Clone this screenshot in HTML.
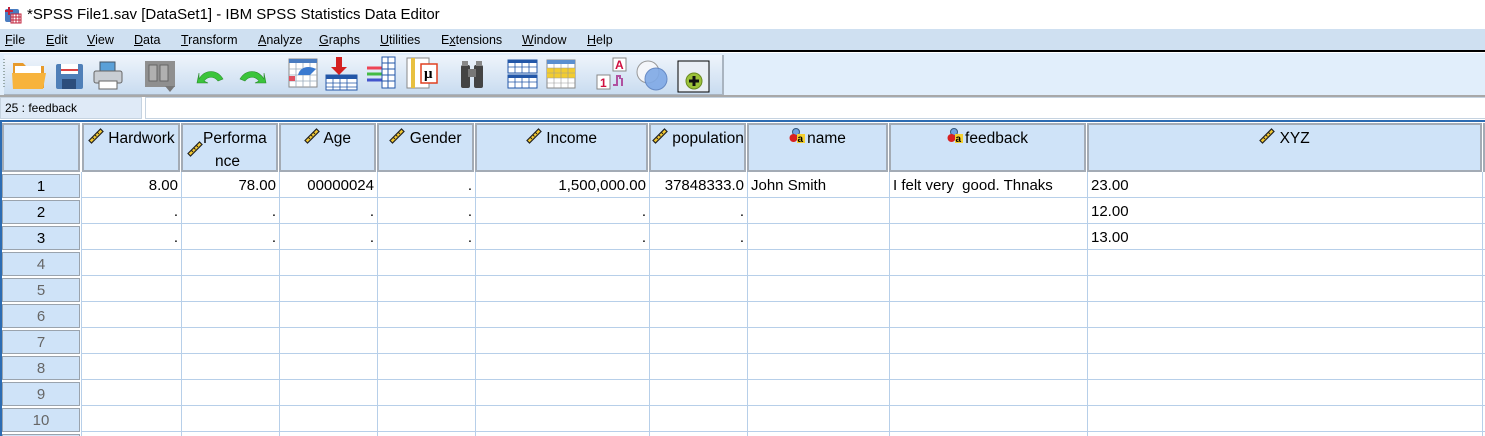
<!DOCTYPE html>
<html><head><meta charset="utf-8">
<style>
*{margin:0;padding:0;box-sizing:border-box}
html,body{width:1485px;height:436px;overflow:hidden}
body{background:#fff;font-family:"Liberation Sans",Arial,sans-serif;position:relative}
.abs{position:absolute}
#title{left:0;top:0;width:1485px;height:29px;background:#fff;font-size:15px;color:#000}
#menu{left:0;top:29px;width:1485px;height:23px;background:#cfe0f1;border-bottom:2px solid #000;font-size:12.5px}
#menu span{position:absolute;top:4px}
#tb{left:0;top:53px;width:1485px;height:44px;background:#e1eefb;border-bottom:2px solid #a8a8a8}
#tbin{left:4px;top:55px;width:720px;height:40px;background:linear-gradient(#eef4fb,#c9dcf0);border-right:2px solid #a9b4c0;border-bottom:1px solid #a9b4c0}
#ed{left:0;top:98px;width:1485px;height:23px;background:#fff}
.rh{position:absolute;left:2px;width:78px;height:24px;background:#cfe3f8;border:1px solid #9aa3ad;text-align:center;font-size:15px;line-height:23px}
.hd{position:absolute;top:123px;height:49px;background:#cfe3f8;border:2px solid #a3abb5;text-align:center;font-size:15.5px;line-height:23px;padding-top:2px;color:#000}
.row{position:absolute;left:81px;height:26px;display:flex;border-left:1px solid #b7cfe9}
.row div{height:26px;border-right:1px solid #b7cfe9;border-bottom:1px solid #b7cfe9;font-size:15px;line-height:28px;padding:0 3px;text-align:right;white-space:nowrap;overflow:hidden}
.row.last,.row.last div{height:4px;border-bottom:none}
.row div.l{text-align:left}
.c1{width:100px}.c2{width:98px}.c3{width:98px}.c4{width:98px}.c5{width:174px}.c6{width:98px}.c7{width:142px}.c8{width:198px}.c9{width:395px}.c10{width:4px}
.ic{position:absolute}
.ru{vertical-align:-1px}
</style></head><body>
<svg width="0" height="0" style="position:absolute"><defs><symbol id="r" viewBox="0 0 16 16"><path d="M1 12.5L12.5 1 15 3.5 3.5 15z" fill="#f2c832" stroke="#222" stroke-width="1.2"/><path d="M4.5 9.5l1.5 1.5M7 7l1.5 1.5M9.5 4.5l1.5 1.5" stroke="#222" stroke-width="1"/></symbol></defs></svg>
<div id="title" class="abs">
<svg class="ic" style="left:4px;top:6px" width="18" height="18" viewBox="0 0 18 18"><rect x="1" y="3" width="14" height="13" rx="2" fill="#4a7cc0"/><rect x="7" y="8" width="10" height="9" fill="#fff" stroke="#c0223b"/><path d="M9 8v9M12 8v9M15 8v9M7 11h10M7 14h10" stroke="#c0223b" stroke-width="1"/><path d="M5 1v8M1 5h8" stroke="#c0223b" stroke-width="2"/></svg>
<span class="abs" style="left:27px;top:6px">*SPSS File1.sav [DataSet1] - IBM SPSS Statistics Data Editor</span>
</div>
<div id="menu" class="abs">
<span style="left:5px"><u>F</u>ile</span><span style="left:46px"><u>E</u>dit</span><span style="left:87px"><u>V</u>iew</span><span style="left:134px"><u>D</u>ata</span><span style="left:181px"><u>T</u>ransform</span><span style="left:258px"><u>A</u>nalyze</span><span style="left:319px"><u>G</u>raphs</span><span style="left:380px"><u>U</u>tilities</span><span style="left:441px">E<u>x</u>tensions</span><span style="left:522px"><u>W</u>indow</span><span style="left:587px"><u>H</u>elp</span>
</div>
<div id="tb" class="abs"></div>
<div id="tbin" class="abs"></div>
<svg class="abs" style="left:0;top:53px" width="730" height="44" viewBox="0 0 730 44">
<path d="M4 6v30" stroke="#9aa" stroke-width="2" stroke-dasharray="1 2"/>
<path d="M13 10h10l3 3h18v22H13z" fill="#e79a2b"/><rect x="15" y="13" width="26" height="10" fill="#fff"/><path d="M12 20h34l-3 16H13z" fill="#f7b33c"/>
<rect x="56" y="11" width="27" height="25" rx="2" fill="#4f7fb8"/><rect x="61" y="11" width="17" height="10" fill="#fff"/><rect x="61" y="16" width="17" height="2" fill="#d44"/><rect x="62" y="26" width="14" height="10" fill="#2c4d7b"/>
<rect x="100" y="9" width="15" height="10" fill="#5aa0d8" stroke="#456"/><rect x="94" y="18" width="28" height="12" rx="2" fill="#c9ced4" stroke="#666"/><rect x="99" y="28" width="18" height="8" fill="#fff" stroke="#666"/>
<rect x="145" y="8" width="30" height="26" fill="#8f8f8f"/><rect x="149" y="12" width="8" height="16" fill="#b0b0b0" stroke="#666"/><rect x="160" y="12" width="8" height="16" fill="#b0b0b0" stroke="#666"/><path d="M165 33h10l-5 6z" fill="#777"/>
<path d="M199 26c6-10 18-10 24 0l-5 2c-4-5-10-5-14 0l4 2h-11l2-10z" fill="#3bc43b" stroke="#2a8a2a" stroke-width="0.6"/>
<path d="M264 26c-6-10-18-10-24 0l5 2c4-5 10-5 14 0l-4 2h11l-2-10z" fill="#3bc43b" stroke="#2a8a2a" stroke-width="0.6"/>
<rect x="289" y="6" width="28" height="28" fill="#fff" stroke="#888"/><rect x="289" y="6" width="28" height="4" fill="#4a7cc0"/><path d="M289 16h28M289 22h28M289 28h28M296 10v24M303 10v24M310 10v24" stroke="#9ab" stroke-width="0.8"/><path d="M298 22c2-8 10-10 18-6l-6 6z" fill="#3a7ad0"/><rect x="289" y="23" width="6" height="5" fill="#e05060"/>
<rect x="326" y="22" width="31" height="15" fill="#fff" stroke="#2357a8"/><rect x="326" y="22" width="31" height="4" fill="#2357a8"/><path d="M326 30h31M326 34h31M333 26v11M340 26v11M347 26v11" stroke="#2357a8" stroke-width="0.8"/><path d="M336 4h6v10h5l-8 8-8-8h5z" fill="#d42020"/>
<path d="M367 15h16" stroke-width="3" stroke="#e45"/><path d="M367 21h16" stroke="#4b4" stroke-width="3"/><path d="M367 27h16" stroke="#45c" stroke-width="3"/><rect x="382" y="4" width="13" height="31" fill="#fff" stroke="#2357a8"/><path d="M382 10h13M382 16h13M382 22h13M382 28h13M388 4v31" stroke="#2357a8"/>
<rect x="407" y="5" width="22" height="30" fill="#fff" stroke="#888"/><rect x="411" y="5" width="4" height="30" fill="#e8c040"/><rect x="421" y="11" width="16" height="19" fill="#fff" stroke="#e04020" stroke-width="1.5"/><text x="424" y="25" font-size="15" font-family="Liberation Serif" font-weight="bold">μ</text>
<rect x="461" y="12" width="9" height="23" rx="2" fill="#444"/><rect x="474" y="12" width="9" height="23" rx="2" fill="#444"/><rect x="468" y="16" width="8" height="8" fill="#777"/><rect x="462" y="8" width="6" height="5" fill="#888"/><rect x="476" y="8" width="6" height="5" fill="#888"/>
<rect x="508" y="7" width="29" height="13" fill="#fff" stroke="#2357a8"/><rect x="508" y="7" width="29" height="3" fill="#2357a8"/><path d="M508 14h29M515 10v10M522 10v10M529 10v10" stroke="#2357a8" stroke-width="0.8"/>
<rect x="508" y="22" width="29" height="13" fill="#fff" stroke="#2357a8"/><rect x="508" y="22" width="29" height="3" fill="#2357a8"/><path d="M508 29h29M515 25v10M522 25v10M529 25v10" stroke="#2357a8" stroke-width="0.8"/>
<rect x="547" y="7" width="28" height="28" fill="#fff" stroke="#888"/><rect x="547" y="7" width="28" height="4" fill="#5b8fd0"/><rect x="547" y="15" width="28" height="10" fill="#f2cc30"/><path d="M547 15h28M547 20h28M547 25h28M547 30h28M554 11v24M561 11v24M568 11v24" stroke="#999" stroke-width="0.6"/>
<rect x="613" y="5" width="13" height="13" fill="#fff" stroke="#888"/><text x="615" y="16" font-size="12" font-weight="bold" fill="#d01040">A</text><rect x="597" y="22" width="13" height="14" fill="#fff" stroke="#888"/><text x="600" y="34" font-size="12" font-weight="bold" fill="#d01040">1</text><path d="M613 32h4v-9h3v3M622 33v-8" stroke="#b050a0" stroke-width="2" fill="none"/>
<circle cx="648" cy="19" r="11" fill="#f4f6fa" stroke="#999"/><circle cx="656" cy="26" r="11" fill="#7fa9e6" stroke="#5a80c0" opacity="0.9"/>
<rect x="678" y="8" width="31" height="31" fill="#e9eef5" stroke="#000"/><circle cx="694" cy="28" r="8" fill="#9cc23a" stroke="#6a8a20"/><path d="M694 23v10M689 28h10" stroke="#111" stroke-width="3"/>
</svg>
<div id="ed" class="abs"></div>
<div class="abs" style="left:0;top:97px;width:142px;height:22px;background:#dfeaf7;border:1px solid #c6d3e0;font-size:12px;line-height:20px;padding-left:4px">25 : feedback</div>
<div class="abs" style="left:145px;top:97px;width:1340px;height:22px;border:1px solid #c6d3e0;border-right:none;background:#fff"></div>
<div class="abs" style="left:0;top:120px;width:1485px;height:2px;background:#2c6cb3"></div>
<div class="abs" style="left:0;top:122px;width:2px;height:314px;background:#2c6cb3"></div>

<div class="hd" style="left:2px;width:78px"></div>
<div class="hd" style="left:82px;width:98px;text-align:left;padding-left:4px"><svg class="ru" width="16" height="16"><use href="#r"/></svg> Hardwork</div>
<div class="hd" style="left:181px;width:97px;padding-left:20px;text-align:left"><svg class="ic" style="left:4px;top:16px" width="16" height="16"><use href="#r"/></svg>Performa<br><span style="padding-left:12px">nce</span></div>
<div class="hd" style="left:279px;width:97px"><svg class="ru" width="16" height="16"><use href="#r"/></svg> Age</div>
<div class="hd" style="left:377px;width:97px"><svg class="ru" width="16" height="16"><use href="#r"/></svg> Gender</div>
<div class="hd" style="left:475px;width:173px"><svg class="ru" width="16" height="16"><use href="#r"/></svg> Income</div>
<div class="hd" style="left:649px;width:97px;text-align:left;padding-left:1px"><svg class="ru" width="16" height="16"><use href="#r"/></svg> population</div>
<div class="hd" style="left:747px;width:141px"><svg width="18" height="16" viewBox="0 0 18 16"><circle cx="7" cy="5" r="3.5" fill="#6fa0e0" stroke="#357"/><circle cx="4.5" cy="11" r="4" fill="#d82020"/><rect x="8" y="7" width="8" height="9" fill="#f5d030"/><text x="8.5" y="15" font-size="10" font-weight="bold">a</text></svg>name</div>
<div class="hd" style="left:889px;width:197px"><svg width="18" height="16" viewBox="0 0 18 16"><circle cx="7" cy="5" r="3.5" fill="#6fa0e0" stroke="#357"/><circle cx="4.5" cy="11" r="4" fill="#d82020"/><rect x="8" y="7" width="8" height="9" fill="#f5d030"/><text x="8.5" y="15" font-size="10" font-weight="bold">a</text></svg>feedback</div>
<div class="hd" style="left:1087px;width:395px"><svg class="ru" width="16" height="16"><use href="#r"/></svg> XYZ</div>
<div class="hd" style="left:1483px;width:2px"></div>

<div class="row" style="top:172px"><div class="c1">8.00</div><div class="c2">78.00</div><div class="c3">00000024</div><div class="c4">.</div><div class="c5">1,500,000.00</div><div class="c6">37848333.0</div><div class="c7 l">John Smith</div><div class="c8 l">I felt very&nbsp; good. Thnaks</div><div class="c9 l">23.00</div><div class="c10"></div></div>
<div class="row" style="top:198px"><div class="c1">.</div><div class="c2">.</div><div class="c3">.</div><div class="c4">.</div><div class="c5">.</div><div class="c6">.</div><div class="c7"></div><div class="c8"></div><div class="c9 l">12.00</div><div class="c10"></div></div>
<div class="row" style="top:224px"><div class="c1">.</div><div class="c2">.</div><div class="c3">.</div><div class="c4">.</div><div class="c5">.</div><div class="c6">.</div><div class="c7"></div><div class="c8"></div><div class="c9 l">13.00</div><div class="c10"></div></div>
<div class="row" style="top:250px"><div class="c1"></div><div class="c2"></div><div class="c3"></div><div class="c4"></div><div class="c5"></div><div class="c6"></div><div class="c7"></div><div class="c8"></div><div class="c9"></div><div class="c10"></div></div>
<div class="row" style="top:276px"><div class="c1"></div><div class="c2"></div><div class="c3"></div><div class="c4"></div><div class="c5"></div><div class="c6"></div><div class="c7"></div><div class="c8"></div><div class="c9"></div><div class="c10"></div></div>
<div class="row" style="top:302px"><div class="c1"></div><div class="c2"></div><div class="c3"></div><div class="c4"></div><div class="c5"></div><div class="c6"></div><div class="c7"></div><div class="c8"></div><div class="c9"></div><div class="c10"></div></div>
<div class="row" style="top:328px"><div class="c1"></div><div class="c2"></div><div class="c3"></div><div class="c4"></div><div class="c5"></div><div class="c6"></div><div class="c7"></div><div class="c8"></div><div class="c9"></div><div class="c10"></div></div>
<div class="row" style="top:354px"><div class="c1"></div><div class="c2"></div><div class="c3"></div><div class="c4"></div><div class="c5"></div><div class="c6"></div><div class="c7"></div><div class="c8"></div><div class="c9"></div><div class="c10"></div></div>
<div class="row" style="top:380px"><div class="c1"></div><div class="c2"></div><div class="c3"></div><div class="c4"></div><div class="c5"></div><div class="c6"></div><div class="c7"></div><div class="c8"></div><div class="c9"></div><div class="c10"></div></div>
<div class="row" style="top:406px"><div class="c1"></div><div class="c2"></div><div class="c3"></div><div class="c4"></div><div class="c5"></div><div class="c6"></div><div class="c7"></div><div class="c8"></div><div class="c9"></div><div class="c10"></div></div>
<div class="row last" style="top:432px"><div class="c1"></div><div class="c2"></div><div class="c3"></div><div class="c4"></div><div class="c5"></div><div class="c6"></div><div class="c7"></div><div class="c8"></div><div class="c9"></div><div class="c10"></div></div>

<div class="rh" style="top:174px">1</div>
<div class="rh" style="top:200px">2</div>
<div class="rh" style="top:226px">3</div>
<div class="rh" style="top:252px;color:#666">4</div>
<div class="rh" style="top:278px;color:#666">5</div>
<div class="rh" style="top:304px;color:#666">6</div>
<div class="rh" style="top:330px;color:#666">7</div>
<div class="rh" style="top:356px;color:#666">8</div>
<div class="rh" style="top:382px;color:#666">9</div>
<div class="rh" style="top:408px;color:#666">10</div>
<div class="rh" style="top:434px;height:2px;border-bottom:none"></div>
</body></html>
